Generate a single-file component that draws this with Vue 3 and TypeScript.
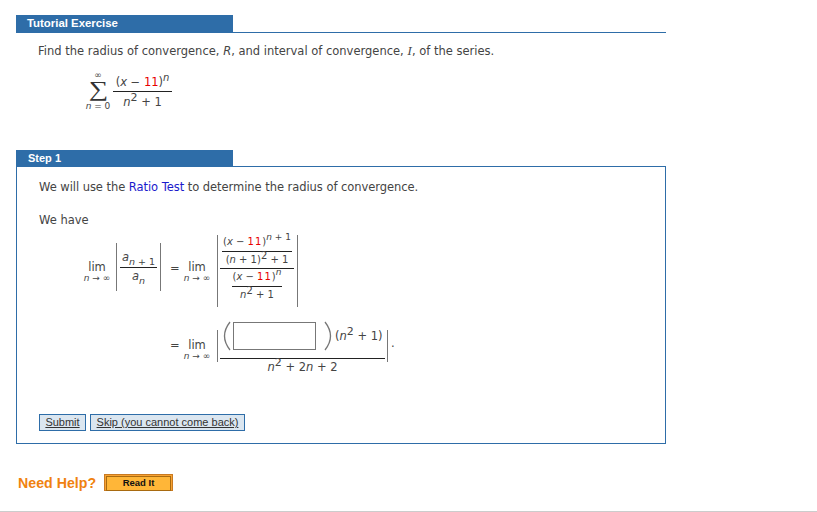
<script setup lang="ts">
const title = 'Tutorial Exercise'
</script>

<template>
  <div class="page">
    <div class="bar"><span class="tab">{{ title }}</span></div>
    <p class="intro">Find the radius of convergence, <i>R</i>, and interval of convergence, <i class="serif">I</i>, of the series.</p>
    <div class="series">
      <div class="sum">
        <span class="small">∞</span>
        <span class="sigma">∑</span>
        <span class="small"><i>n</i> = 0</span>
      </div>
      <div class="frac series-frac">
        <div class="num"><span>(<i>x</i> − <span class="red">11</span>)<sup><i>n</i></sup></span></div>
        <div class="den"><span><i>n</i><sup class="big">2</sup> + 1</span></div>
      </div>
    </div>

    <div class="bar step-bar"><span class="tab step">Step 1</span></div>
    <div class="box">
      <p class="line1">We will use the <span class="blue">Ratio Test</span> to determine the radius of convergence.</p>
      <p class="line2">We have</p>

      <div class="eq eq1">
        <div class="lim lim-a"><span>lim</span><small><i>n</i> → ∞</small></div>
        <div class="abs abs-a">
          <div class="frac ratio">
            <div class="num"><span><i>a</i><sub><i>n</i> + 1</sub></span></div>
            <div class="den"><span><i>a</i><sub><i>n</i></sub></span></div>
          </div>
        </div>
        <span class="equals">=</span>
        <div class="lim"><span>lim</span><small><i>n</i> → ∞</small></div>
        <div class="abs abs-b">
          <div class="frac outer">
            <div class="num">
              <div class="frac inner top">
                <div class="num"><span>(<i>x</i> − <span class="red spaced">11</span>)<sup><i>n</i> + 1</sup></span></div>
                <div class="den"><span>(<i>n</i> + 1)<sup class="big">2</sup> + 1</span></div>
              </div>
            </div>
            <div class="den">
              <div class="frac inner bottom">
                <div class="num"><span>(<i>x</i> − <span class="red spaced">11</span>)<sup><i>n</i></sup></span></div>
                <div class="den"><span><i>n</i><sup class="big">2</sup> + 1</span></div>
              </div>
            </div>
          </div>
        </div>
      </div>

      <div class="eq eq2">
        <span class="equals">=</span>
        <div class="lim"><span>lim</span><small><i>n</i> → ∞</small></div>
        <div class="abs abs-c">
          <div class="frac wide">
            <div class="num row">
              <svg class="paren" width="11" height="30" viewBox="0 0 11 30"><path d="M8 1 Q-3 15 8 29" fill="none" stroke="#777" stroke-width="1.3"/></svg>
              <span class="answer"></span>
              <svg class="paren" width="19" height="30" viewBox="0 0 19 30"><path d="M9 1 Q20 15 9 29" fill="none" stroke="#777" stroke-width="1.3"/></svg>
              <span class="factor">(<i>n</i><sup class="big">2</sup> + 1)</span>
            </div>
            <div class="den"><span><i>n</i><sup class="big">2</sup> + 2<i>n</i> + 2</span></div>
          </div>
        </div>
        <span class="period">.</span>
      </div>

      <div class="buttons">
        <button class="btn submit" type="button">Submit</button>
        <button class="btn skip" type="button">Skip (you cannot come back)</button>
      </div>
    </div>

    <div class="help">
      <span class="need">Need Help?</span>
      <button class="read" type="button"><span>Read It</span></button>
    </div>
  </div>
  <div class="rule"></div>
</template>

<style scoped>
.page {
  width: 650px;
  height: 496px;
  padding: 15px 0 0 16px;
  font-family: "DejaVu Sans", Verdana, sans-serif;
  font-size: 11.5px;
  color: #444;
}
.bar { border-bottom: 1px solid #2e6da8; height: 17px; }
.tab {
  display: block;
  width: 206px;
  height: 18px;
  padding-left: 11px;
  background: #2e6da8;
  color: #fff;
  font: bold 11.4px/17px "Liberation Sans", Arial, sans-serif;
}
.intro { margin: 11px 0 0 22px; line-height: 14px; }
.serif { font-family: "DejaVu Serif", serif; }
.series { display: flex; align-items: flex-start; margin: 12px 0 0 69px; height: 41px; }
.sum { display: flex; flex-direction: column; align-items: center; width: 26px; margin-right: 2px; }
.small { font-size: 9px; line-height: 10px; height: 10px; white-space: nowrap; }
.sigma { font-size: 21px; line-height: 19px; height: 19px; margin: 0 0 2px; color: #333; font-family: "Liberation Serif", serif; transform: scaleX(1.3); }
.frac { display: inline-flex; flex-direction: column; align-items: stretch; white-space: nowrap; }
.frac > .num { display: flex; justify-content: center; align-items: flex-start; border-bottom: 1px solid #222; line-height: 14px; }
.frac > .den { display: flex; justify-content: center; line-height: 15px; }
.series-frac { width: 59px; margin-top: 4px; }
.series-frac > .num { height: 17px; line-height: 16px; }
.series-frac > .den { padding-top: 3px; line-height: 14px; }
sup { font-size: 10px; line-height: 0; vertical-align: 5px; }
sup.big { font-size: 11px; vertical-align: 5px; }
sub { font-size: 9.5px; line-height: 0; vertical-align: -4px; }
.red { color: #e80000; }
.spaced { letter-spacing: 1px; }
.blue { color: #1a1acc; }
.step-bar { margin-top: 39px; height: 16px; }
.step-bar .tab { height: 17px; font-size: 11px; line-height: 16px; padding-left: 12px; width: 205px; }
.box {
  width: 648px;
  height: 263px;
  border: 1px solid #2e6da8;
  border-top: 0;
  padding-top: 13px;
}
.line1 { margin: 0 0 0 22px; line-height: 14px; letter-spacing: -0.05px; }
.line2 { margin: 19px 0 0 22px; line-height: 14px; }
.eq { display: flex; align-items: flex-start; }
.eq1 { margin: 8px 0 0 65px; height: 72px; }
.eq2 { margin: 13px 0 0 153px; height: 55px; }
.lim { display: flex; flex-direction: column; align-items: center; width: 30px; line-height: 12px; margin-right: 5px; }
.lim small { font-size: 9px; line-height: 9px; margin-top: 1px; white-space: nowrap; }
.lim-a { margin-right: 4px; }
.eq1 .lim { margin-top: 26px; }
.equals { width: 10px; margin: 26px 2px 0 9px; line-height: 14px; }
.abs { border-left: 1px solid #777; border-right: 1px solid #777; display: flex; align-items: flex-start; }
.abs-a { height: 48px; margin-top: 8px; padding: 0 3px; }
.abs-b { height: 72px; padding: 0 3px 0 2px; }
.abs-c { height: 32px; margin-top: 10px; padding: 0 2px; }
.ratio { width: 37px; }
.ratio > .num { height: 25px; align-items: flex-end; line-height: 16px; padding-bottom: 0; box-sizing: border-box; }
.ratio > .num > span { margin-bottom: 2px; }
.ratio > .den { padding-top: 1px; }
.outer { width: 74px; }
.outer > .num { height: 33px; }
.inner { width: 70px; font-size: 10px; }
.inner sup { font-size: 9px; }
.inner sup.big { font-size: 10px; vertical-align: 4px; }
.top > .num { height: 16px; line-height: 13px; }
.top > .den { height: 16px; line-height: 16px; }
.bottom { width: 50px; }
.bottom > .num { height: 17px; line-height: 16px; }
.bottom > .den { line-height: 16px; }
.eq2 .equals { margin: 18px 2px 0 0; }
.eq2 .lim { margin-top: 19px; }
.wide { width: 165px; margin-top: -10px; }
.frac > .row { height: 36px; padding: 2px 0 0 2px; justify-content: flex-start; }
.answer { width: 81px; height: 26px; background: #fff; border: 1px solid #777; display: block; flex: none; }
.factor { margin-top: 7px; }
.paren { flex: none; margin-top: -1px; }
.wide > .den { line-height: 16px; }
.period { margin: 16px 0 0 3px; line-height: 14px; }
.buttons { display: flex; gap: 4px; margin: 39px 0 0 22px; }
.btn {
  height: 17px;
  padding: 0;
  background: #dbe6f0;
  border: 1px solid #2e6da8;
  color: #333;
  font: 11px/15px "Liberation Sans", Arial, sans-serif;
  text-decoration: underline;
}
.submit { width: 47px; }
.skip { width: 155px; }
.help { display: flex; align-items: center; margin-top: 30px; padding-left: 2px; }
.need { font: bold 14.2px "Liberation Sans", Arial, sans-serif; color: #f0820f; width: 86px; }
.read {
  width: 69px;
  height: 17px;
  padding: 1px;
  background: #f7a233;
  border: 1px solid #c97a20;
}
.read span {
  display: block;
  height: 13px;
  background: #ffb638;
  border: 1px solid #a86a10;
  font: bold 9.5px/12px "Liberation Sans", Arial, sans-serif;
  color: #111;
}
.rule { height: 1px; background: #ccc; }
</style>

<style>
html, body { background: #fff; overflow: hidden; }
</style>
